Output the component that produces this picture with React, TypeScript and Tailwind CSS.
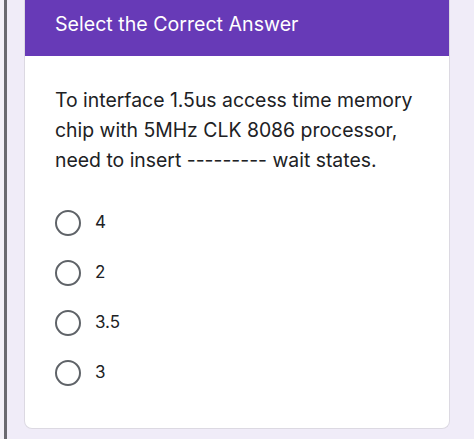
import React from 'react';

const options = ['4', '2', '3.5', '3'];

function Radio() {
  return <span className="block h-[26px] w-[26px] shrink-0 rounded-full border-[2.5px] border-[#5f6368]" />;
}

export default function App() {
  return (
    <div
      className="flex h-[439px] w-[474px] overflow-hidden bg-[#f0ecf8]"
      style={{ fontFamily: 'Inter, "Noto Sans", sans-serif' }}
    >
      {/* page edge */}
      <div className="w-[4px] bg-[#f3f0f8]" />
      <div className="w-[3px] bg-[#6a6970]" />

      <div className="flex-1 pl-[17px] pr-[24px] pb-[10px]">
        <div className="flex h-full flex-col overflow-hidden rounded-b-lg border border-t-0 border-[#dcd9e2] bg-white">
          {/* header */}
          <div className="flex h-[56px] items-center bg-[#673ab7] pb-[6px] pl-[30px]">
            <span className="text-[19.6px] text-white">Select the Correct Answer</span>
          </div>

          {/* question */}
          <div className="pl-[30px] pr-2 pt-[29px]">
            <p className="text-[19.4px] leading-[30px] text-[#202124]">
              To interface 1.5us access time memory
              <br />
              chip with 5MHz CLK 8086 processor,
              <br />
              need to insert --------- wait states.
            </p>
          </div>

          {/* options */}
          <div className="flex flex-col gap-[24px] pl-[30px] pt-[35px]">
            {options.map((o) => (
              <div key={o} className="flex items-center gap-[14px]">
                <Radio />
                <span className="text-[17px] text-[#202124]">{o}</span>
              </div>
            ))}
          </div>
        </div>
      </div>
    </div>
  );
}
